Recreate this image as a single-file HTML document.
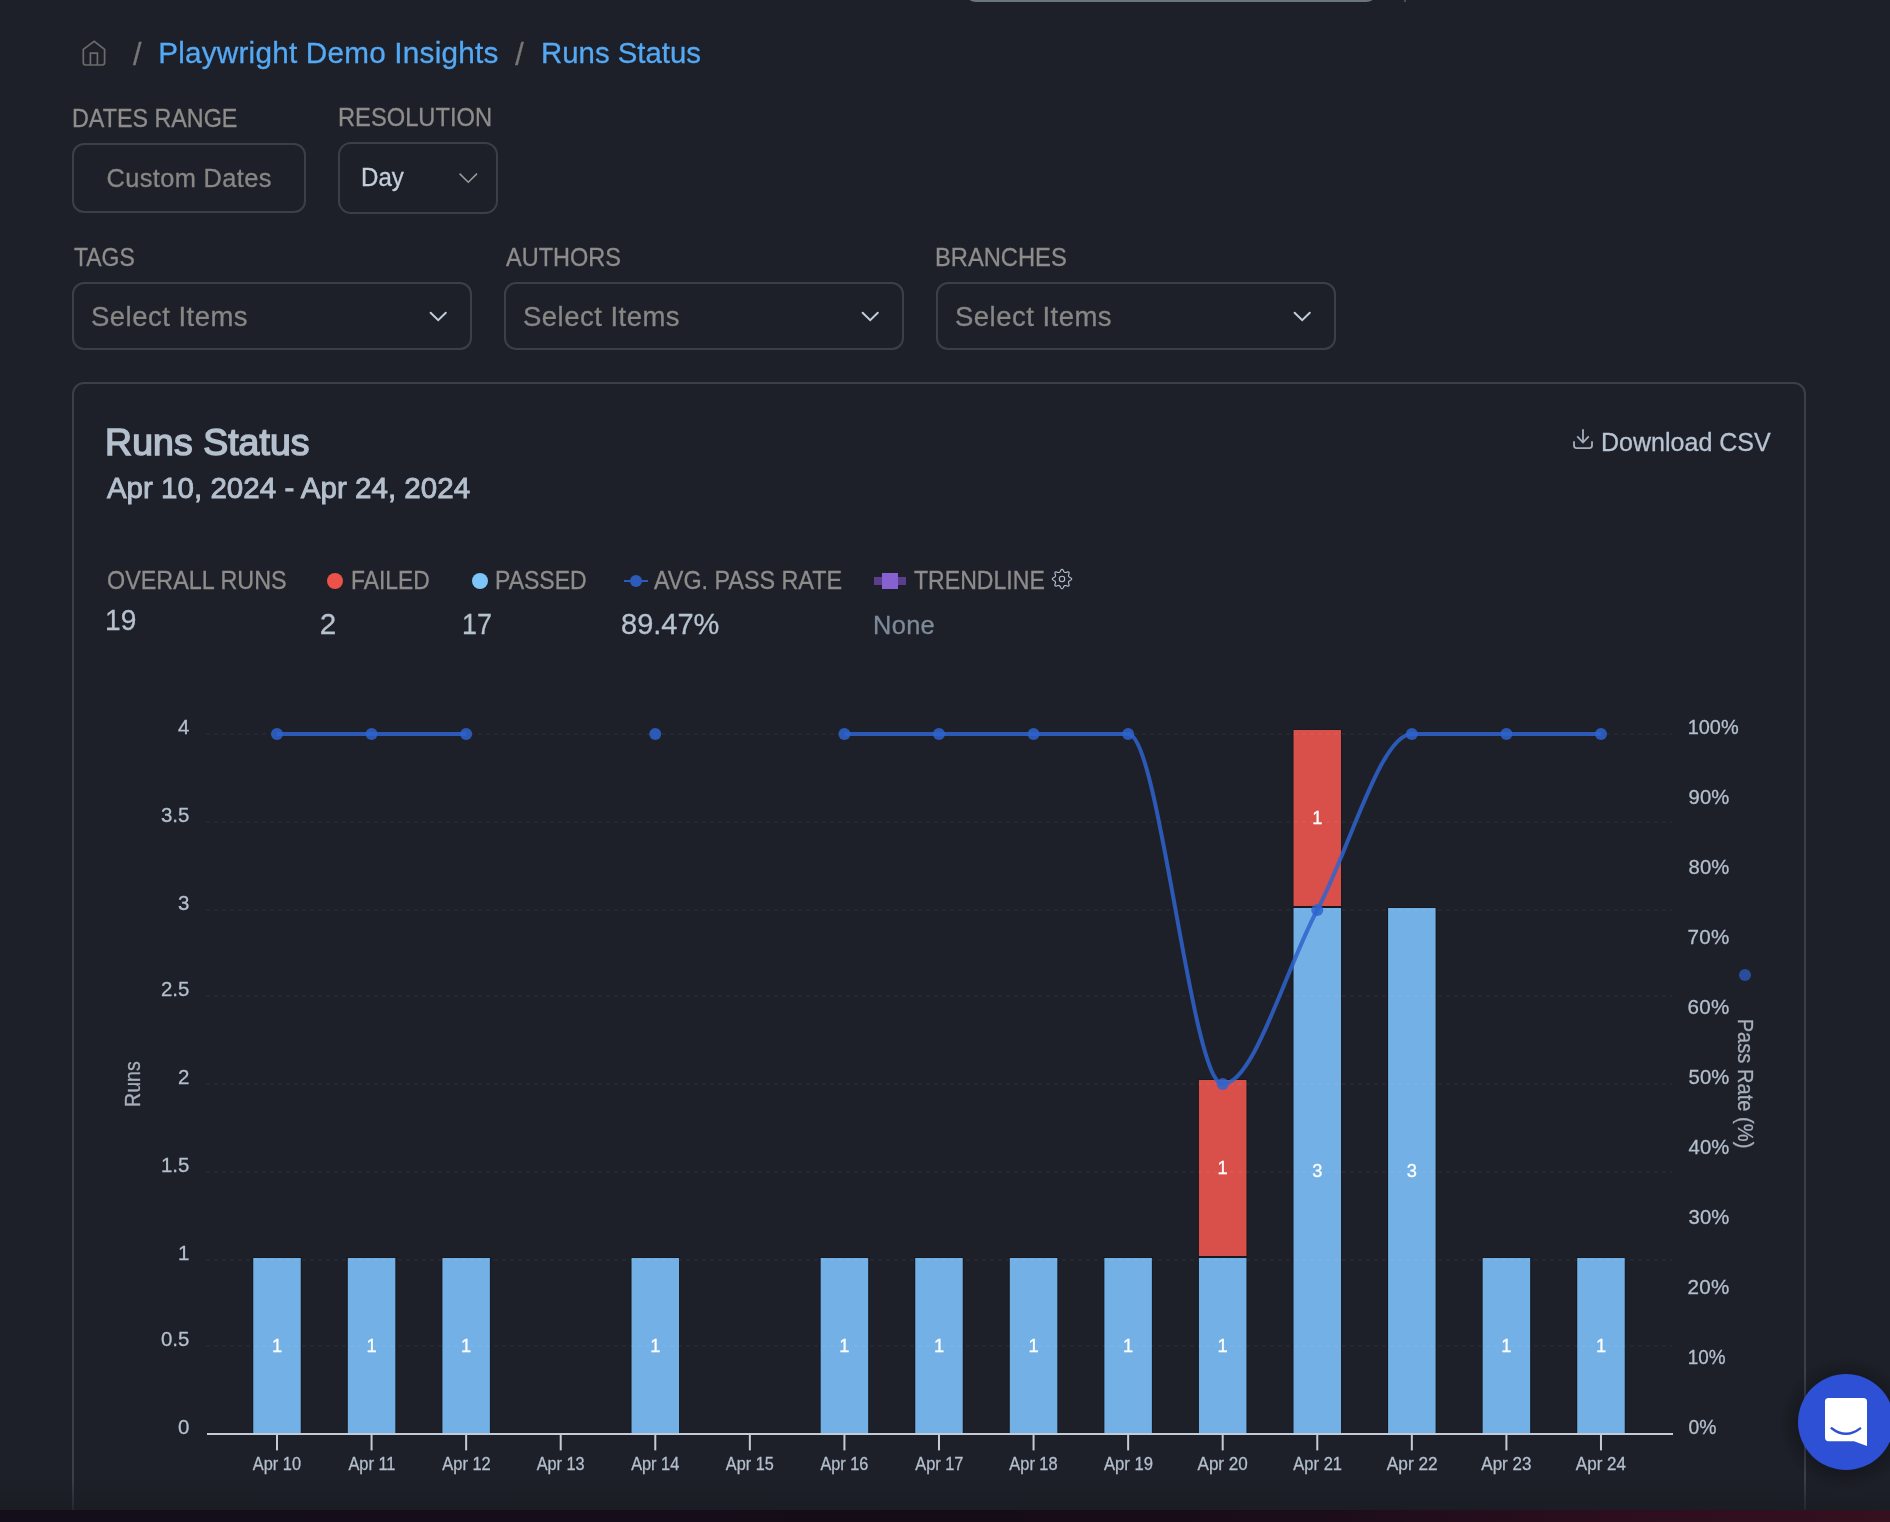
<!DOCTYPE html>
<html lang="en">
<head>
<meta charset="utf-8">
<title>Runs Status - Playwright Demo Insights</title>
<style>
html,body{margin:0;padding:0;background:#1e2029;}
body{width:1890px;height:1522px;position:relative;overflow:hidden;font-family:"Liberation Sans",sans-serif;}
#root{position:absolute;left:0;top:0;width:1890px;height:1522px;overflow:hidden;will-change:transform;}
.t{position:absolute;white-space:nowrap;line-height:1;-webkit-text-stroke:0.3px;transform-origin:0 0;}
.box{position:absolute;box-sizing:border-box;border:2px solid #3a404a;}
svg{position:absolute;left:0;top:0;}
svg text{font-family:"Liberation Sans",sans-serif;stroke-width:0.3px;}
.fade{position:absolute;left:0;top:1478px;width:1890px;height:32px;background:linear-gradient(to bottom,rgba(26,28,34,0),rgba(26,28,34,0.7));}
.strip{position:absolute;left:0;top:1510px;width:1890px;height:12px;background:linear-gradient(to right,#140e1b 0%,#160c18 53%,#1c0d1a 70%,#2c0e1e 85%,#35101f 100%);}
.topbar{position:absolute;left:964px;top:-10px;width:414px;height:12px;border-radius:0 0 12px 12px;background:#6b7580;}
.topmark{position:absolute;left:1404px;top:0;width:2px;height:2px;background:#4a505a;}
</style>
</head>
<body>
<div id="root">
<div class="topbar"></div><div class="topmark"></div>
<!-- filters -->
<div class="box" style="left:72px;top:143px;width:234px;height:70px;border-radius:12px"></div>
<div class="box" style="left:338px;top:142px;width:160px;height:72px;border-radius:13px"></div>
<div class="box" style="left:72px;top:282px;width:400px;height:68px;border-radius:12px"></div>
<div class="box" style="left:504px;top:282px;width:400px;height:68px;border-radius:12px"></div>
<div class="box" style="left:936px;top:282px;width:400px;height:68px;border-radius:12px"></div>

<!-- card -->
<div class="box" style="left:72px;top:382px;width:1734px;height:1200px;border-radius:12px"></div>
<!-- text -->
<div class="t" style="left:133.00px;top:39.00px;font-size:30.5px;color:#777777;font-weight:400">/</div>
<div class="t" style="left:158.20px;top:38.00px;font-size:29.7px;color:#54a9f5;font-weight:400;letter-spacing:0.222px">Playwright Demo Insights</div>
<div class="t" style="left:515.20px;top:39.00px;font-size:30.5px;color:#777777;font-weight:400">/</div>
<div class="t" style="left:540.62px;top:38.00px;font-size:29.7px;color:#54a9f5;font-weight:400;transform:scaleX(0.9895)">Runs Status</div>
<div class="t" style="left:71.96px;top:106.00px;font-size:25.4px;color:#8e8d8b;font-weight:400;transform:scaleX(0.9183)">DATES RANGE</div>
<div class="t" style="left:337.93px;top:105.00px;font-size:25.4px;color:#8e8d8b;font-weight:400;transform:scaleX(0.9331)">RESOLUTION</div>
<div class="t" style="left:106.50px;top:166.00px;font-size:25.4px;color:#878786;font-weight:400;letter-spacing:0.367px">Custom Dates</div>
<div class="t" style="left:361.10px;top:165.00px;font-size:25.4px;color:#c3cedb;font-weight:400;transform:scaleX(0.9481)">Day</div>
<div class="t" style="left:73.80px;top:245.00px;font-size:25.4px;color:#8e8d8b;font-weight:400;transform:scaleX(0.9033)">TAGS</div>
<div class="t" style="left:505.60px;top:245.00px;font-size:25.4px;color:#8e8d8b;font-weight:400;transform:scaleX(0.9261)">AUTHORS</div>
<div class="t" style="left:935.43px;top:245.00px;font-size:25.4px;color:#8e8d8b;font-weight:400;transform:scaleX(0.9338)">BRANCHES</div>
<div class="t" style="left:91.00px;top:303.00px;font-size:27.5px;color:#878786;font-weight:400;letter-spacing:0.477px">Select Items</div>
<div class="t" style="left:523.00px;top:303.00px;font-size:27.5px;color:#878786;font-weight:400;letter-spacing:0.477px">Select Items</div>
<div class="t" style="left:955.00px;top:303.00px;font-size:27.5px;color:#878786;font-weight:400;letter-spacing:0.477px">Select Items</div>
<div class="t" style="left:105.10px;top:424.00px;font-size:37.4px;color:#b4c0ce;font-weight:400;-webkit-text-stroke:1.5px;letter-spacing:0.072px">Runs Status</div>
<div class="t" style="left:106.90px;top:473.00px;font-size:29.5px;color:#b4c0ce;font-weight:400;-webkit-text-stroke:0.9px;letter-spacing:0.028px">Apr 10, 2024 - Apr 24, 2024</div>
<div class="t" style="left:1600.73px;top:430.00px;font-size:25.4px;color:#b8c4d2;font-weight:400;transform:scaleX(0.9856)">Download CSV</div>
<div class="t" style="left:106.68px;top:568.00px;font-size:25.4px;color:#8e8d8b;font-weight:400;transform:scaleX(0.9202)">OVERALL RUNS</div>
<div class="t" style="left:351.40px;top:568.00px;font-size:25.4px;color:#8e8d8b;font-weight:400;transform:scaleX(0.8984)">FAILED</div>
<div class="t" style="left:495.39px;top:568.00px;font-size:25.4px;color:#8e8d8b;font-weight:400;transform:scaleX(0.9059)">PASSED</div>
<div class="t" style="left:653.60px;top:568.00px;font-size:25.4px;color:#8e8d8b;font-weight:400;transform:scaleX(0.9187)">AVG. PASS RATE</div>
<div class="t" style="left:914.10px;top:568.00px;font-size:25.4px;color:#8e8d8b;font-weight:400;transform:scaleX(0.9093)">TRENDLINE</div>
<div class="t" style="left:104.91px;top:605.00px;font-size:29.7px;color:#b7c2cf;font-weight:400;transform:scaleX(0.9472)">19</div>
<div class="t" style="left:319.80px;top:609.00px;font-size:29.7px;color:#b7c2cf;font-weight:400">2</div>
<div class="t" style="left:462.39px;top:609.00px;font-size:29.7px;color:#b7c2cf;font-weight:400;transform:scaleX(0.9046)">17</div>
<div class="t" style="left:620.82px;top:609.00px;font-size:29.7px;color:#b7c2cf;font-weight:400;transform:scaleX(0.9769)">89.47%</div>
<div class="t" style="left:873.00px;top:613.00px;font-size:25.4px;color:#7d8a99;font-weight:400;letter-spacing:0.341px">None</div>
<svg width="1890" height="1522" viewBox="0 0 1890 1522">
<!-- home icon -->
<path d="M83.3,49.4L94.2,41.4L104.6,49.4V62.6Q104.6,65 102.2,65H85.7Q83.3,65 83.3,62.6Z" fill="none" stroke="#6b6b6b" stroke-width="1.7" stroke-linejoin="miter"/>
<path d="M90.4,65V53.1H97.4V65" fill="none" stroke="#6b6b6b" stroke-width="1.7"/>
<!-- chevrons -->
<path d="M459.6,173.6L468.3,182.2L477,173.6" fill="none" stroke="#9b9b9b" stroke-width="1.5"/>
<path d="M430.6,312.8L438.2,320.2L445.8,312.8" fill="none" stroke="#c3cedb" stroke-width="2" stroke-linecap="round" stroke-linejoin="miter"/>
<path d="M862.6,312.8L870.2,320.2L877.8,312.8" fill="none" stroke="#c3cedb" stroke-width="2" stroke-linecap="round" stroke-linejoin="miter"/>
<path d="M1294.6,312.8L1302.2,320.2L1309.8,312.8" fill="none" stroke="#c3cedb" stroke-width="2" stroke-linecap="round" stroke-linejoin="miter"/>

<!-- download icon -->
<g fill="none" stroke="#a3adbb" stroke-width="1.8">
<path d="M1583,429.2V442.4"/><path d="M1577.2,436.4L1583,442.4L1588.8,436.4"/>
<path d="M1574,441.2V445.6Q1574,448.1 1576.5,448.1H1589.5Q1592,448.1 1592,445.6V441.2"/>
</g>
<!-- legend markers -->
<circle cx="335" cy="581" r="8" fill="#ec5249"/>
<circle cx="480" cy="581" r="8" fill="#7cc4fa"/>
<rect x="624" y="580" width="24" height="2" fill="#2d5bb9"/><circle cx="636" cy="581" r="6" fill="#2d5bb9"/>
<rect x="874" y="577" width="32" height="8" fill="#5a3f8e"/><rect x="882" y="573" width="16" height="16" fill="#8861d0"/>
<!-- gear -->
<path d="M1071.70,579.00L1071.64,579.30L1071.45,579.59L1071.17,579.87L1070.81,580.11L1070.42,580.33L1070.02,580.53L1069.66,580.71L1069.35,580.89L1069.10,581.06L1068.92,581.25L1068.79,581.44L1068.69,581.65L1068.61,581.86L1068.53,582.07L1068.48,582.30L1068.48,582.56L1068.53,582.86L1068.63,583.20L1068.76,583.59L1068.90,584.01L1069.02,584.44L1069.10,584.87L1069.10,585.26L1069.03,585.60L1068.86,585.86L1068.60,586.03L1068.26,586.10L1067.87,586.10L1067.44,586.02L1067.01,585.90L1066.59,585.76L1066.20,585.63L1065.86,585.53L1065.56,585.48L1065.30,585.48L1065.07,585.53L1064.86,585.61L1064.65,585.69L1064.44,585.79L1064.25,585.92L1064.06,586.10L1063.89,586.35L1063.71,586.66L1063.53,587.02L1063.33,587.42L1063.11,587.81L1062.87,588.17L1062.59,588.45L1062.30,588.64L1062.00,588.70L1061.70,588.64L1061.41,588.45L1061.13,588.17L1060.89,587.81L1060.67,587.42L1060.47,587.02L1060.29,586.66L1060.11,586.35L1059.94,586.10L1059.75,585.92L1059.56,585.79L1059.35,585.69L1059.14,585.61L1058.93,585.53L1058.70,585.48L1058.44,585.48L1058.14,585.53L1057.80,585.63L1057.41,585.76L1056.99,585.90L1056.56,586.02L1056.13,586.10L1055.74,586.10L1055.40,586.03L1055.14,585.86L1054.97,585.60L1054.90,585.26L1054.90,584.87L1054.98,584.44L1055.10,584.01L1055.24,583.59L1055.37,583.20L1055.47,582.86L1055.52,582.56L1055.52,582.30L1055.47,582.07L1055.39,581.86L1055.31,581.65L1055.21,581.44L1055.08,581.25L1054.90,581.06L1054.65,580.89L1054.34,580.71L1053.98,580.53L1053.58,580.33L1053.19,580.11L1052.83,579.87L1052.55,579.59L1052.36,579.30L1052.30,579.00L1052.36,578.70L1052.55,578.41L1052.83,578.13L1053.19,577.89L1053.58,577.67L1053.98,577.47L1054.34,577.29L1054.65,577.11L1054.90,576.94L1055.08,576.75L1055.21,576.56L1055.31,576.35L1055.39,576.14L1055.47,575.93L1055.52,575.70L1055.52,575.44L1055.47,575.14L1055.37,574.80L1055.24,574.41L1055.10,573.99L1054.98,573.56L1054.90,573.13L1054.90,572.74L1054.97,572.40L1055.14,572.14L1055.40,571.97L1055.74,571.90L1056.13,571.90L1056.56,571.98L1056.99,572.10L1057.41,572.24L1057.80,572.37L1058.14,572.47L1058.44,572.52L1058.70,572.52L1058.93,572.47L1059.14,572.39L1059.35,572.31L1059.56,572.21L1059.75,572.08L1059.94,571.90L1060.11,571.65L1060.29,571.34L1060.47,570.98L1060.67,570.58L1060.89,570.19L1061.13,569.83L1061.41,569.55L1061.70,569.36L1062.00,569.30L1062.30,569.36L1062.59,569.55L1062.87,569.83L1063.11,570.19L1063.33,570.58L1063.53,570.98L1063.71,571.34L1063.89,571.65L1064.06,571.90L1064.25,572.08L1064.44,572.21L1064.65,572.31L1064.86,572.39L1065.07,572.47L1065.30,572.52L1065.56,572.52L1065.86,572.47L1066.20,572.37L1066.59,572.24L1067.01,572.10L1067.44,571.98L1067.87,571.90L1068.26,571.90L1068.60,571.97L1068.86,572.14L1069.03,572.40L1069.10,572.74L1069.10,573.13L1069.02,573.56L1068.90,573.99L1068.76,574.41L1068.63,574.80L1068.53,575.14L1068.48,575.44L1068.48,575.70L1068.53,575.93L1068.61,576.14L1068.69,576.35L1068.79,576.56L1068.92,576.75L1069.10,576.94L1069.35,577.11L1069.66,577.29L1070.02,577.47L1070.42,577.67L1070.81,577.89L1071.17,578.13L1071.45,578.41L1071.64,578.70Z" fill="none" stroke="#b4bfcd" stroke-width="1.15" stroke-linejoin="round"/>
<circle cx="1062" cy="579" r="2.7" fill="none" stroke="#b4bfcd" stroke-width="1.1"/>
<!-- chart -->
<rect x="252.25" y="1257.00" width="49.5" height="177.00" fill="#171a20"/>
<rect x="253.25" y="1258.00" width="47.5" height="175.00" fill="#72b0e5"/>
<text x="277.00" y="1351.80" font-size="18.3" text-anchor="middle" fill="#ffffff" stroke="#ffffff">1</text>
<rect x="346.82" y="1257.00" width="49.5" height="177.00" fill="#171a20"/>
<rect x="347.82" y="1258.00" width="47.5" height="175.00" fill="#72b0e5"/>
<text x="371.57" y="1351.80" font-size="18.3" text-anchor="middle" fill="#ffffff" stroke="#ffffff">1</text>
<rect x="441.39" y="1257.00" width="49.5" height="177.00" fill="#171a20"/>
<rect x="442.39" y="1258.00" width="47.5" height="175.00" fill="#72b0e5"/>
<text x="466.14" y="1351.80" font-size="18.3" text-anchor="middle" fill="#ffffff" stroke="#ffffff">1</text>
<rect x="630.53" y="1257.00" width="49.5" height="177.00" fill="#171a20"/>
<rect x="631.53" y="1258.00" width="47.5" height="175.00" fill="#72b0e5"/>
<text x="655.28" y="1351.80" font-size="18.3" text-anchor="middle" fill="#ffffff" stroke="#ffffff">1</text>
<rect x="819.67" y="1257.00" width="49.5" height="177.00" fill="#171a20"/>
<rect x="820.67" y="1258.00" width="47.5" height="175.00" fill="#72b0e5"/>
<text x="844.42" y="1351.80" font-size="18.3" text-anchor="middle" fill="#ffffff" stroke="#ffffff">1</text>
<rect x="914.24" y="1257.00" width="49.5" height="177.00" fill="#171a20"/>
<rect x="915.24" y="1258.00" width="47.5" height="175.00" fill="#72b0e5"/>
<text x="938.99" y="1351.80" font-size="18.3" text-anchor="middle" fill="#ffffff" stroke="#ffffff">1</text>
<rect x="1008.81" y="1257.00" width="49.5" height="177.00" fill="#171a20"/>
<rect x="1009.81" y="1258.00" width="47.5" height="175.00" fill="#72b0e5"/>
<text x="1033.56" y="1351.80" font-size="18.3" text-anchor="middle" fill="#ffffff" stroke="#ffffff">1</text>
<rect x="1103.38" y="1257.00" width="49.5" height="177.00" fill="#171a20"/>
<rect x="1104.38" y="1258.00" width="47.5" height="175.00" fill="#72b0e5"/>
<text x="1128.13" y="1351.80" font-size="18.3" text-anchor="middle" fill="#ffffff" stroke="#ffffff">1</text>
<rect x="1197.95" y="1257.00" width="49.5" height="177.00" fill="#171a20"/>
<rect x="1198.95" y="1258.00" width="47.5" height="175.00" fill="#72b0e5"/>
<text x="1222.70" y="1351.80" font-size="18.3" text-anchor="middle" fill="#ffffff" stroke="#ffffff">1</text>
<rect x="1197.95" y="1079.00" width="49.5" height="178.00" fill="#171a20"/>
<rect x="1198.95" y="1080.00" width="47.5" height="176.00" fill="#d9504a"/>
<text x="1222.70" y="1174.30" font-size="18.3" text-anchor="middle" fill="#ffffff" stroke="#ffffff">1</text>
<rect x="1292.52" y="907.00" width="49.5" height="527.00" fill="#171a20"/>
<rect x="1293.52" y="908.00" width="47.5" height="525.00" fill="#72b0e5"/>
<text x="1317.27" y="1176.80" font-size="18.3" text-anchor="middle" fill="#ffffff" stroke="#ffffff">3</text>
<rect x="1292.52" y="729.00" width="49.5" height="178.00" fill="#171a20"/>
<rect x="1293.52" y="730.00" width="47.5" height="176.00" fill="#d9504a"/>
<text x="1317.27" y="824.30" font-size="18.3" text-anchor="middle" fill="#ffffff" stroke="#ffffff">1</text>
<rect x="1387.09" y="907.00" width="49.5" height="527.00" fill="#171a20"/>
<rect x="1388.09" y="908.00" width="47.5" height="525.00" fill="#72b0e5"/>
<text x="1411.84" y="1176.80" font-size="18.3" text-anchor="middle" fill="#ffffff" stroke="#ffffff">3</text>
<rect x="1481.66" y="1257.00" width="49.5" height="177.00" fill="#171a20"/>
<rect x="1482.66" y="1258.00" width="47.5" height="175.00" fill="#72b0e5"/>
<text x="1506.41" y="1351.80" font-size="18.3" text-anchor="middle" fill="#ffffff" stroke="#ffffff">1</text>
<rect x="1576.23" y="1257.00" width="49.5" height="177.00" fill="#171a20"/>
<rect x="1577.23" y="1258.00" width="47.5" height="175.00" fill="#72b0e5"/>
<text x="1600.98" y="1351.80" font-size="18.3" text-anchor="middle" fill="#ffffff" stroke="#ffffff">1</text>
<line x1="206.0" x2="1672.5" y1="1346.00" y2="1346.00" stroke="#ffffff" stroke-opacity="0.038" stroke-width="2" stroke-dasharray="4 4"/>
<line x1="206.0" x2="1672.5" y1="1260.00" y2="1260.00" stroke="#ffffff" stroke-opacity="0.038" stroke-width="2" stroke-dasharray="4 4"/>
<line x1="206.0" x2="1672.5" y1="1172.00" y2="1172.00" stroke="#ffffff" stroke-opacity="0.038" stroke-width="2" stroke-dasharray="4 4"/>
<line x1="206.0" x2="1672.5" y1="1084.00" y2="1084.00" stroke="#ffffff" stroke-opacity="0.038" stroke-width="2" stroke-dasharray="4 4"/>
<line x1="206.0" x2="1672.5" y1="996.00" y2="996.00" stroke="#ffffff" stroke-opacity="0.038" stroke-width="2" stroke-dasharray="4 4"/>
<line x1="206.0" x2="1672.5" y1="910.00" y2="910.00" stroke="#ffffff" stroke-opacity="0.038" stroke-width="2" stroke-dasharray="4 4"/>
<line x1="206.0" x2="1672.5" y1="822.00" y2="822.00" stroke="#ffffff" stroke-opacity="0.038" stroke-width="2" stroke-dasharray="4 4"/>
<line x1="206.0" x2="1672.5" y1="734.00" y2="734.00" stroke="#ffffff" stroke-opacity="0.038" stroke-width="2" stroke-dasharray="4 4"/>
<rect x="207" y="1433" width="1466" height="2" fill="#c3cbd6"/>
<rect x="276.00" y="1434" width="2" height="16.4" fill="#c3cbd6"/>
<rect x="370.57" y="1434" width="2" height="16.4" fill="#c3cbd6"/>
<rect x="465.14" y="1434" width="2" height="16.4" fill="#c3cbd6"/>
<rect x="559.71" y="1434" width="2" height="16.4" fill="#c3cbd6"/>
<rect x="654.28" y="1434" width="2" height="16.4" fill="#c3cbd6"/>
<rect x="748.85" y="1434" width="2" height="16.4" fill="#c3cbd6"/>
<rect x="843.42" y="1434" width="2" height="16.4" fill="#c3cbd6"/>
<rect x="937.99" y="1434" width="2" height="16.4" fill="#c3cbd6"/>
<rect x="1032.56" y="1434" width="2" height="16.4" fill="#c3cbd6"/>
<rect x="1127.13" y="1434" width="2" height="16.4" fill="#c3cbd6"/>
<rect x="1221.70" y="1434" width="2" height="16.4" fill="#c3cbd6"/>
<rect x="1316.27" y="1434" width="2" height="16.4" fill="#c3cbd6"/>
<rect x="1410.84" y="1434" width="2" height="16.4" fill="#c3cbd6"/>
<rect x="1505.41" y="1434" width="2" height="16.4" fill="#c3cbd6"/>
<rect x="1599.98" y="1434" width="2" height="16.4" fill="#c3cbd6"/>
<path d="M277.00,734.00C308.52,734.00,340.05,734.00,371.57,734.00C403.09,734.00,434.62,734.00,466.14,734.00" fill="none" stroke="#2e64ce" stroke-opacity="0.85" stroke-width="4" stroke-linecap="butt"/>
<path d="M844.42,734.00C875.94,734.00,907.47,734.00,938.99,734.00C970.51,734.00,1002.04,734.00,1033.56,734.00C1065.08,734.00,1096.61,734.00,1128.13,734.00C1159.65,734.00,1191.18,1084.00,1222.70,1084.00C1254.22,1084.00,1285.75,968.33,1317.27,910.00C1348.79,851.67,1380.32,734.00,1411.84,734.00C1443.36,734.00,1474.89,734.00,1506.41,734.00C1537.93,734.00,1569.46,734.00,1600.98,734.00" fill="none" stroke="#2e64ce" stroke-opacity="0.85" stroke-width="4" stroke-linecap="butt"/>
<circle cx="277.00" cy="734.00" r="6" fill="#2e64ce" fill-opacity="0.85"/>
<circle cx="371.57" cy="734.00" r="6" fill="#2e64ce" fill-opacity="0.85"/>
<circle cx="466.14" cy="734.00" r="6" fill="#2e64ce" fill-opacity="0.85"/>
<circle cx="655.28" cy="734.00" r="6" fill="#2e64ce" fill-opacity="0.85"/>
<circle cx="844.42" cy="734.00" r="6" fill="#2e64ce" fill-opacity="0.85"/>
<circle cx="938.99" cy="734.00" r="6" fill="#2e64ce" fill-opacity="0.85"/>
<circle cx="1033.56" cy="734.00" r="6" fill="#2e64ce" fill-opacity="0.85"/>
<circle cx="1128.13" cy="734.00" r="6" fill="#2e64ce" fill-opacity="0.85"/>
<circle cx="1222.70" cy="1084.00" r="6" fill="#2e64ce" fill-opacity="0.85"/>
<circle cx="1317.27" cy="910.00" r="6" fill="#2e64ce" fill-opacity="0.85"/>
<circle cx="1411.84" cy="734.00" r="6" fill="#2e64ce" fill-opacity="0.85"/>
<circle cx="1506.41" cy="734.00" r="6" fill="#2e64ce" fill-opacity="0.85"/>
<circle cx="1600.98" cy="734.00" r="6" fill="#2e64ce" fill-opacity="0.85"/>
<circle cx="1745" cy="975" r="6" fill="#2a4c9c"/>
<text transform="translate(178.07,1434.00) scale(0.9938,1)" font-size="20.6" fill="#b4bfcd" stroke="#b4bfcd">0</text>
<text transform="translate(161.00,1346.00) scale(0.9938,1)" font-size="20.6" fill="#b4bfcd" stroke="#b4bfcd">0.5</text>
<text transform="translate(178.07,1260.00) scale(0.9938,1)" font-size="20.6" fill="#b4bfcd" stroke="#b4bfcd">1</text>
<text transform="translate(161.00,1172.00) scale(0.9938,1)" font-size="20.6" fill="#b4bfcd" stroke="#b4bfcd">1.5</text>
<text transform="translate(178.07,1084.00) scale(0.9938,1)" font-size="20.6" fill="#b4bfcd" stroke="#b4bfcd">2</text>
<text transform="translate(161.00,996.00) scale(0.9938,1)" font-size="20.6" fill="#b4bfcd" stroke="#b4bfcd">2.5</text>
<text transform="translate(178.07,910.00) scale(0.9938,1)" font-size="20.6" fill="#b4bfcd" stroke="#b4bfcd">3</text>
<text transform="translate(161.00,822.00) scale(0.9938,1)" font-size="20.6" fill="#b4bfcd" stroke="#b4bfcd">3.5</text>
<text transform="translate(178.07,734.00) scale(0.9938,1)" font-size="20.6" fill="#b4bfcd" stroke="#b4bfcd">4</text>
<text transform="translate(1688.60,1434.00) scale(0.9405,1)" font-size="20.6" fill="#b4bfcd" stroke="#b4bfcd">0%</text>
<text transform="translate(1687.68,1364.00) scale(0.9171,1)" font-size="20.6" fill="#b4bfcd" stroke="#b4bfcd">10%</text>
<text transform="translate(1687.60,1294.00) scale(1.0000,1)" font-size="20.6" letter-spacing="0.197" fill="#b4bfcd" stroke="#b4bfcd">20%</text>
<text transform="translate(1688.60,1224.00) scale(0.9852,1)" font-size="20.6" fill="#b4bfcd" stroke="#b4bfcd">30%</text>
<text transform="translate(1688.60,1154.00) scale(0.9852,1)" font-size="20.6" fill="#b4bfcd" stroke="#b4bfcd">40%</text>
<text transform="translate(1688.60,1084.00) scale(0.9852,1)" font-size="20.6" fill="#b4bfcd" stroke="#b4bfcd">50%</text>
<text transform="translate(1687.60,1014.00) scale(1.0000,1)" font-size="20.6" letter-spacing="0.197" fill="#b4bfcd" stroke="#b4bfcd">60%</text>
<text transform="translate(1687.60,944.00) scale(1.0000,1)" font-size="20.6" letter-spacing="0.197" fill="#b4bfcd" stroke="#b4bfcd">70%</text>
<text transform="translate(1688.60,874.00) scale(0.9852,1)" font-size="20.6" fill="#b4bfcd" stroke="#b4bfcd">80%</text>
<text transform="translate(1688.60,804.00) scale(0.9852,1)" font-size="20.6" fill="#b4bfcd" stroke="#b4bfcd">90%</text>
<text transform="translate(1687.63,734.00) scale(0.9677,1)" font-size="20.6" fill="#b4bfcd" stroke="#b4bfcd">100%</text>
<text transform="translate(252.85,1470.40) scale(0.9240,1)" font-size="17.7" fill="#b4bfcd" stroke="#b4bfcd">Apr 10</text>
<text transform="translate(348.42,1470.40) scale(0.9267,1)" font-size="17.7" fill="#b4bfcd" stroke="#b4bfcd">Apr 11</text>
<text transform="translate(442.29,1470.40) scale(0.9303,1)" font-size="17.7" fill="#b4bfcd" stroke="#b4bfcd">Apr 12</text>
<text transform="translate(536.71,1470.40) scale(0.9182,1)" font-size="17.7" fill="#b4bfcd" stroke="#b4bfcd">Apr 13</text>
<text transform="translate(631.13,1470.40) scale(0.9240,1)" font-size="17.7" fill="#b4bfcd" stroke="#b4bfcd">Apr 14</text>
<text transform="translate(725.85,1470.40) scale(0.9182,1)" font-size="17.7" fill="#b4bfcd" stroke="#b4bfcd">Apr 15</text>
<text transform="translate(820.42,1470.40) scale(0.9182,1)" font-size="17.7" fill="#b4bfcd" stroke="#b4bfcd">Apr 16</text>
<text transform="translate(915.29,1470.40) scale(0.9244,1)" font-size="17.7" fill="#b4bfcd" stroke="#b4bfcd">Apr 17</text>
<text transform="translate(1009.36,1470.40) scale(0.9259,1)" font-size="17.7" fill="#b4bfcd" stroke="#b4bfcd">Apr 18</text>
<text transform="translate(1103.98,1470.40) scale(0.9420,1)" font-size="17.7" fill="#b4bfcd" stroke="#b4bfcd">Apr 19</text>
<text transform="translate(1197.50,1470.40) scale(0.9641,1)" font-size="17.7" fill="#b4bfcd" stroke="#b4bfcd">Apr 20</text>
<text transform="translate(1293.37,1470.40) scale(0.9322,1)" font-size="17.7" fill="#b4bfcd" stroke="#b4bfcd">Apr 21</text>
<text transform="translate(1386.84,1470.40) scale(0.9751,1)" font-size="17.7" fill="#b4bfcd" stroke="#b4bfcd">Apr 22</text>
<text transform="translate(1481.31,1470.40) scale(0.9603,1)" font-size="17.7" fill="#b4bfcd" stroke="#b4bfcd">Apr 23</text>
<text transform="translate(1575.83,1470.40) scale(0.9622,1)" font-size="17.7" fill="#b4bfcd" stroke="#b4bfcd">Apr 24</text>
<text transform="translate(140.3,1106.91) rotate(-90) scale(0.9070,1)" font-size="21.6" letter-spacing="0.000" fill="#a6afbb" stroke="#a6afbb">Runs</text>
<text transform="translate(1737.8,1018.67) rotate(90) scale(0.9321,1)" font-size="21.6" letter-spacing="0.000" fill="#a6afbb" stroke="#a6afbb">Pass Rate (%)</text>
<!-- intercom -->
<defs><radialGradient id="ish" cx="0.5" cy="0.5" r="0.5"><stop offset="0.72" stop-color="#000" stop-opacity="0.22"/><stop offset="1" stop-color="#000" stop-opacity="0"/></radialGradient></defs>
<circle cx="1846" cy="1424" r="66" fill="url(#ish)"/>
<circle cx="1846" cy="1422" r="48" fill="#2d50d4"/>
<path d="M1828.6,1398H1863.4Q1867,1398 1867,1401.6V1446L1854,1441.2H1828.6Q1825,1441.2 1825,1437.6V1401.6Q1825,1398 1828.6,1398Z" fill="#ffffff"/>
<path d="M1831.6,1428.2Q1846,1439.4 1860.2,1428.4" fill="none" stroke="#2d50d4" stroke-width="2.4" stroke-linecap="round"/>
</svg>
<div class="fade"></div>
<div class="strip"></div>
</div>
</body>
</html>
